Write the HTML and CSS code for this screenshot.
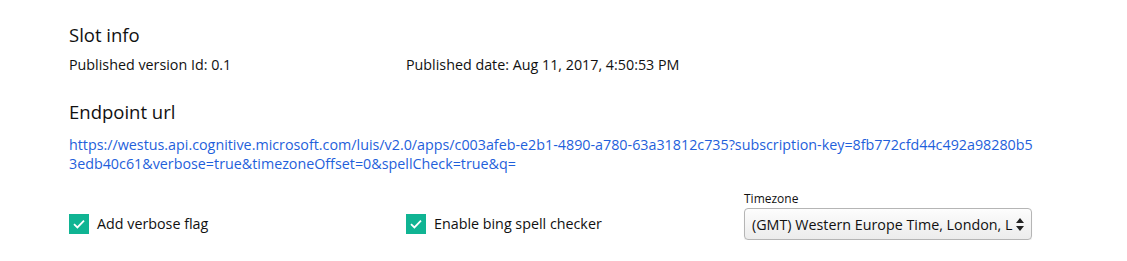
FILE: index.html
```html
<!DOCTYPE html>
<html>
<head>
    <title>Publish settings</title>
    <link rel="stylesheet" href="styles.css">
</head>
<body>
    <div class="panel">
        <!-- Slot info -->
        <h2 class="section-title">Slot info</h2>
        <div class="row">
            <div class="cell">Published version Id: 0.1</div>
            <div class="cell">Published date: Aug 11, 2017, 4:50:53 PM</div>
        </div>

        <!-- Endpoint -->
        <h2 class="section-title endpoint-title">Endpoint url</h2>
        <a class="endpoint-url" href="#">https://westus.api.cognitive.microsoft.com/luis/v2.0/apps/c003afeb-e2b1-4890-a780-63a31812c735?subscription-key=8fb772cfd44c492a98280b53edb40c61&amp;verbose=true&amp;timezoneOffset=0&amp;spellCheck=true&amp;q=</a>

        <div class="row options">
            <label class="check">
                <span class="check-box">
                    <svg width="14" height="14" viewBox="0 0 14 14"><path d="M2 7.2 L5.4 10.4 L12 3.6" fill="none" stroke="#fff" stroke-width="1.8"/></svg>
                </span>
                Add verbose flag
            </label>
            <label class="check">
                <span class="check-box">
                    <svg width="14" height="14" viewBox="0 0 14 14"><path d="M2 7.2 L5.4 10.4 L12 3.6" fill="none" stroke="#fff" stroke-width="1.8"/></svg>
                </span>
                Enable bing spell checker
            </label>
            <div class="field">
                <div class="field-label">Timezone</div>
                <div class="select-wrap">
                    <select class="select">
                        <option>(GMT) Western Europe Time, London, Lisbon, Casablanca</option>
                    </select>
                    <svg class="select-arrows" width="8" height="13" viewBox="0 0 8 13"><path d="M4 0 L8 5 L0 5 Z M0 8 L8 8 L4 13 Z" fill="#222"/></svg>
                </div>
            </div>
        </div>
    </div>
</body>
</html>
```

FILE: styles.css
```css
body {
    margin: 0;
    font-family: 'Open Sans', 'Noto Sans', sans-serif;
    background-color: #fff;
    color: #111;
}

.panel {
    width: 966px;
    padding: 20px 0 0 69px;
}

.section-title {
    margin: 0;
    font-size: 18.5px;
    font-weight: 400;
    line-height: 30px;
}

.endpoint-title {
    margin-top: 22px;
}

.row {
    display: grid;
    grid-template-columns: 337px 338px 1fr;
    font-size: 14.3px;
    line-height: 20px;
    margin-top: 5px;
}

.endpoint-url {
    display: block;
    margin-top: 8px;
    font-size: 14.3px;
    line-height: 19px;
    color: #1f5fdb;
    text-decoration: none;
    word-break: break-all;
}

/* Options */
.options {
    margin-top: 18px;
    align-items: end;
}

.check {
    display: flex;
    align-items: center;
    gap: 8px;
    height: 32px;
}

.check-box {
    width: 20px;
    height: 20px;
    background: #10b493;
    display: flex;
    justify-content: center;
    align-items: center;
}

.field-label {
    font-size: 12px;
    line-height: 16px;
    margin-bottom: 1px;
}

.select-wrap {
    position: relative;
    width: 288px;
}

.select {
    appearance: none;
    -webkit-appearance: none;
    width: 288px;
    height: 32px;
    border: 1px solid #b5b5b5;
    border-radius: 4px;
    background: linear-gradient(#fdfdfd, #ececec);
    padding: 0 18px 0 7px;
    box-shadow: 0 1px 1px rgba(0,0,0,0.08);
    font-family: inherit;
    font-size: 14.3px;
    color: #111;
}

.select-arrows {
    position: absolute;
    right: 8px;
    top: 10px;
    pointer-events: none;
}
```
